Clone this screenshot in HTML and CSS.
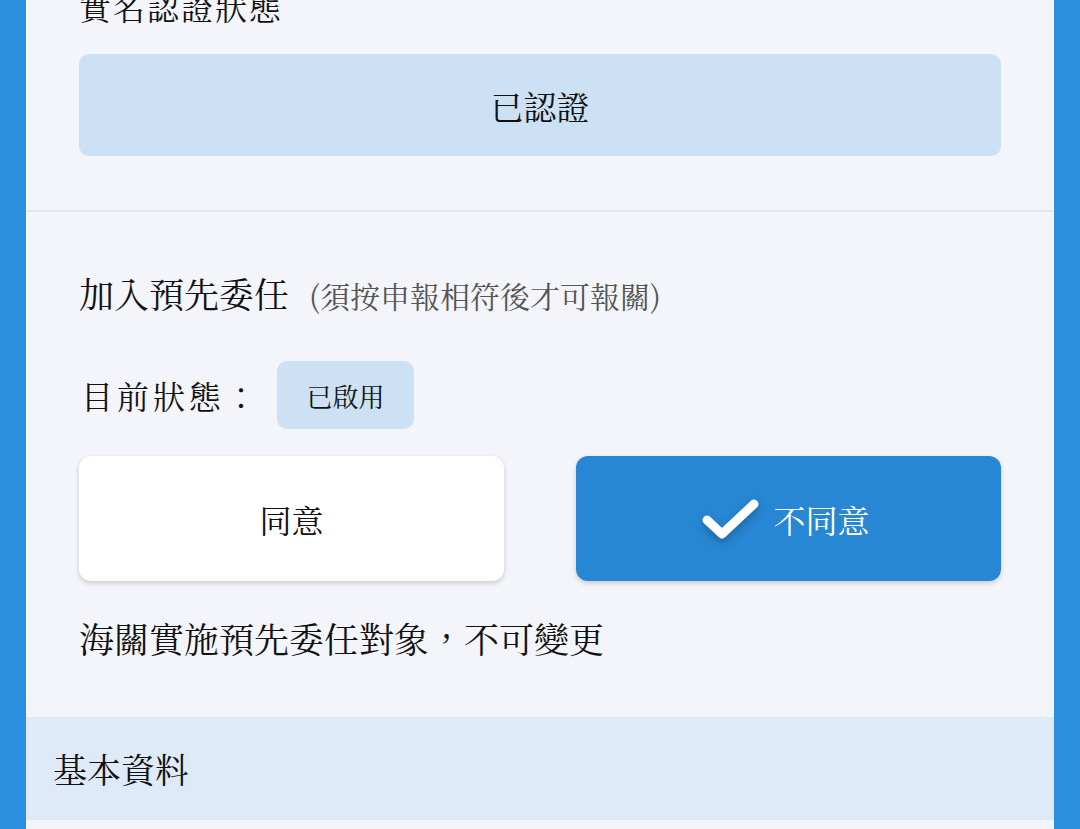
FILE: index.html
```html
<!DOCTYPE html>
<html lang="zh-Hant">
<head>
<meta charset="utf-8">
<link rel="stylesheet" href="styles.css">
</head>
<body>
<div class="page">
  <section class="block first">
    <div class="label top-label">實名認證狀態</div>
    <div class="status-box">已認證</div>
  </section>
  <div class="divider"></div>
  <section class="block second">
    <div class="label heading">加入預先委任<span class="hint">(須按申報相符後才可報關)</span></div>
    <div class="status-row">
      <span class="label spaced">目前狀態：</span>
      <span class="badge">已啟用</span>
    </div>
    <div class="buttons">
      <button class="btn btn-white">同意</button>
      <button class="btn btn-blue">
        <svg class="check" width="60" height="46" viewBox="0 0 60 46">
          <path d="M6 24 L21 38 L53 8" fill="none" stroke="#ffffff" stroke-width="9" stroke-linecap="round" stroke-linejoin="round"/>
        </svg>
        <span>不同意</span>
      </button>
    </div>
    <div class="label note">海關實施預先委任對象，不可變更</div>
  </section>
  <div class="section-header">基本資料</div>
</div>
</body>
</html>
```

FILE: styles.css
```css
html, body {
  margin: 0;
  padding: 0;
}
body {
  background: #2a8fdf;
  font-family: "Noto Serif CJK TC", "Noto Sans CJK TC", "Noto Sans CJK SC", serif;
  color: #111;
}
.page {
  margin: 0 26px;
  height: 829px;
  overflow: hidden;
  background: #f3f5fa;
}
.block {
  padding: 0 53px;
}
.label {
  font-size: 32px;
  line-height: 40px;
  color: #111;
}
.top-label {
  margin-top: -14px;
  letter-spacing: 2px;
}
.status-box {
  margin-top: 28px;
  height: 102px;
  border-radius: 10px;
  background: #cce1f4;
  display: flex;
  align-items: center;
  justify-content: center;
  font-size: 33px;
  color: #111;
}
.first {
  padding-bottom: 54px;
}
.divider {
  height: 2px;
  background: #e2e5ea;
}
.second {
  padding-top: 61px;
}
.heading {
  font-size: 35px;
}
.hint {
  font-size: 30px;
  color: #555;
  margin-left: 20px;
}
.status-row {
  margin-top: 46px;
  display: flex;
  align-items: center;
  gap: 16px;
}
.spaced {
  letter-spacing: 4px;
  padding-left: 2px;
}
.badge {
  width: 137px;
  height: 68px;
  border-radius: 10px;
  background: #cce1f4;
  display: flex;
  align-items: center;
  justify-content: center;
  font-size: 26px;
  color: #111;
}
.buttons {
  margin-top: 27px;
  display: grid;
  grid-template-columns: 1fr 1fr;
  gap: 72px;
}
.btn {
  height: 125px;
  border: none;
  border-radius: 12px;
  font-family: inherit;
  font-size: 32px;
  display: flex;
  align-items: center;
  justify-content: center;
  box-shadow: 0 2px 5px rgba(0, 0, 0, 0.18);
  padding: 0;
}
.btn-white {
  background: #ffffff;
  color: #111;
}
.btn-blue {
  background: #2787d4;
  color: #ffffff;
  gap: 12px;
}
.check {
  filter: drop-shadow(0 4px 4px rgba(0, 0, 0, 0.25));
  margin-left: -6px;
}
.note {
  margin-top: 37px;
  font-size: 35px;
}
.section-header {
  margin-top: 59px;
  height: 103px;
  background: #deeaf7;
  display: flex;
  align-items: center;
  padding-left: 27px;
  font-size: 34px;
  color: #111;
}
```
